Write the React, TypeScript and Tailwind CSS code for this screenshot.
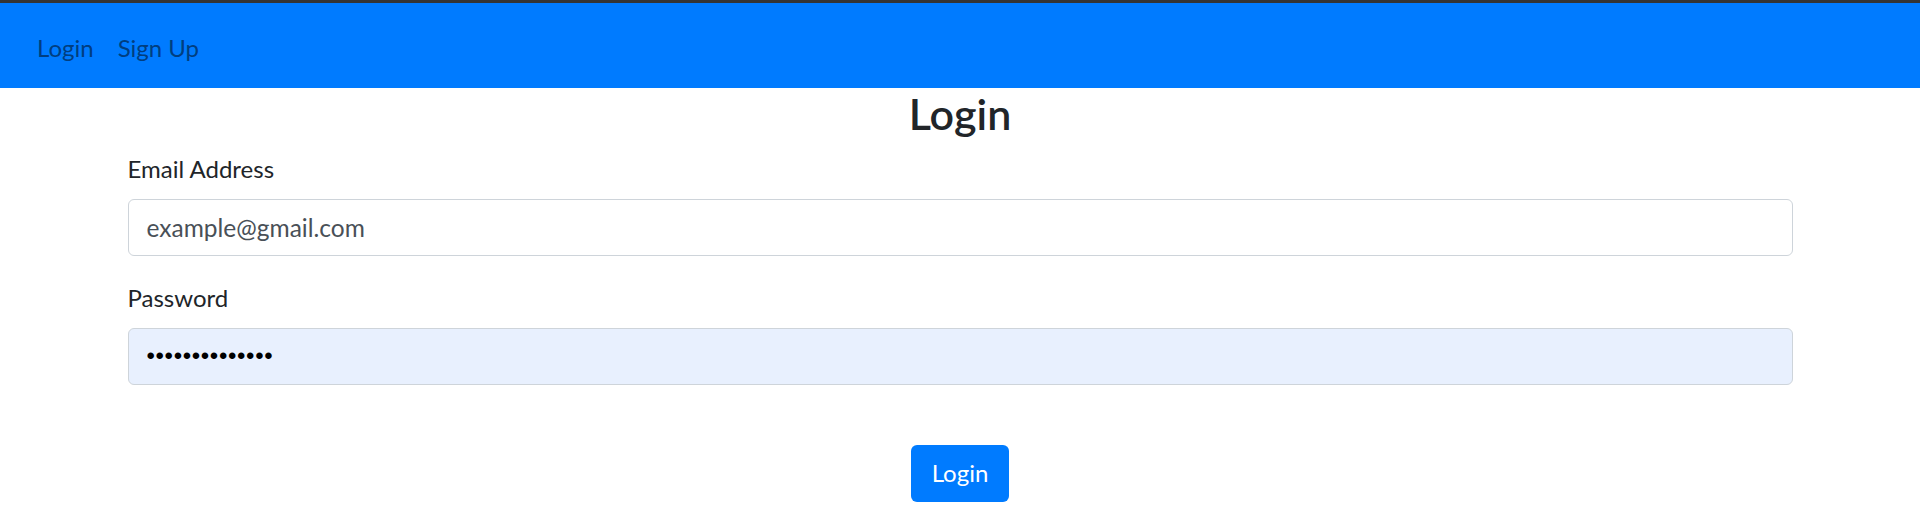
import React from "react";

export default function App() {
  const font = { fontFamily: "Lato, 'Open Sans', sans-serif" };
  return (
    <div className="min-h-[511px] bg-white text-[#212529]" style={font}>
      <div className="h-[3px] bg-[#343434]" />
      <nav className="h-[85px] bg-[#007bff] px-[25px] pt-[27px]">
        <div className="flex text-[24px] leading-[36px] text-[#003e80]">
          <a className="px-[12px]">Login</a>
          <a className="px-[12px]">Sign Up</a>
        </div>
      </nav>
      <div className="mx-auto w-[1710px] px-[22.5px]">
        <h2 className="text-center text-[43px] leading-[1.2] font-semibold">Login</h2>
        <form className="mt-[11px]">
          <div className="mb-[24px]">
            <label className="mb-[12px] block text-[24px] leading-[36px]">Email Address</label>
            <input
              readOnly
              value="example@gmail.com"
              className="block h-[57px] w-full rounded-[6px] border-[1.5px] border-[#ced4da] bg-white px-[18px] text-[24.5px] text-[#495057] outline-none"
              style={font}
            />
          </div>
          <div>
            <label className="mb-[12px] block text-[24px] leading-[36px]">Password</label>
            <input
              readOnly
              type="password"
              value="passwordvalue1"
              className="block h-[57px] w-full rounded-[6px] border-[1.5px] border-[#ced4da] bg-[#e8f0fe] px-[18px] text-[24px] tracking-[0.65px] text-black outline-none"
              style={{ fontFamily: "'Liberation Sans', Arial, sans-serif" }}
            />
          </div>
          <div className="mt-[60px] flex justify-center">
            <button
              type="button"
              className="h-[57px] w-[98px] rounded-[6px] bg-[#007bff] text-[24px] leading-[36px] text-white"
              style={font}
            >
              Login
            </button>
          </div>
        </form>
      </div>
    </div>
  );
}
